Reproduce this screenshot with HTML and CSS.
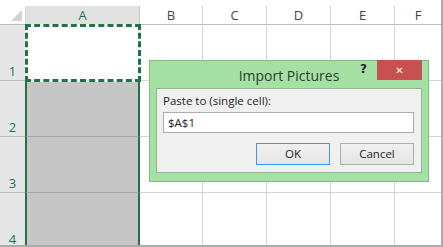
FILE: index.html
```html
<!DOCTYPE html>
<html lang="en">
<head>
    <meta charset="UTF-8">
    <title>Import Pictures</title>
    <link rel="stylesheet" href="styles.css">
</head>
<body>

<div class="sheet">
    <div class="grid">
        <!-- cabecera de columnas -->
        <div class="corner"><span class="tri"></span></div>
        <div class="colhead col-a">A</div>
        <div class="colhead">B</div>
        <div class="colhead">C</div>
        <div class="colhead">D</div>
        <div class="colhead">E</div>
        <div class="colhead last">F</div>

        <div class="rowhead">1</div>
        <div class="cell a active"></div>
        <div class="cell"></div><div class="cell"></div><div class="cell"></div><div class="cell"></div><div class="cell last"></div>

        <div class="rowhead">2</div>
        <div class="cell a"></div>
        <div class="cell"></div><div class="cell"></div><div class="cell"></div><div class="cell"></div><div class="cell last"></div>

        <div class="rowhead">3</div>
        <div class="cell a"></div>
        <div class="cell"></div><div class="cell"></div><div class="cell"></div><div class="cell"></div><div class="cell last"></div>

        <div class="rowhead">4</div>
        <div class="cell a"></div>
        <div class="cell"></div><div class="cell"></div><div class="cell"></div><div class="cell"></div><div class="cell last"></div>
    </div>

    <!-- celda copiada (hormigas) -->
    <div class="marquee"></div>

    <!-- dialogo -->
    <div class="dialog">
        <div class="titlebar">
            <span class="title">Import Pictures</span>
            <span class="help">?</span>
            <span class="close">&#x2715;</span>
        </div>
        <div class="panel">
            <div class="label">Paste to (single cell):</div>
            <div class="input">$A$1</div>
            <div class="buttons">
                <div class="btn default">OK</div>
                <div class="btn">Cancel</div>
            </div>
        </div>
    </div>
</div>

</body>
</html>
```

FILE: styles.css
```css
body {
    margin: 0;
    background: #acacac;
    font-family: "Open Sans", "Liberation Sans", sans-serif;
}
.sheet {
    position: relative;
    width: 441px;
    height: 245px;
    background: #fff;
    padding-top: 6px;
    box-sizing: border-box;
    overflow: hidden;
}
.grid {
    display: grid;
    grid-template-columns: 26px 114px 63px 64px 64px 64px 46px;
    grid-template-rows: 19px 56px 56px 56px 56px;
}
.grid > div {
    box-sizing: border-box;
}

/* cabeceras */
.corner {
    background: #fff;
    border-right: 1px solid #d8d8d8;
    border-bottom: 1px solid #bdbdbd;
    position: relative;
}
.tri {
    position: absolute;
    right: 3px;
    bottom: 3px;
    width: 0;
    height: 0;
    border-left: 11px solid transparent;
    border-bottom: 11px solid #d2d2d2;
}
.colhead {
    font-family: "Open Sans", sans-serif;
    font-size: 13px;
    color: #444;
    text-align: center;
    line-height: 18px;
    border-right: 1px solid #d8d8d8;
    border-bottom: 1px solid #bdbdbd;
}
.colhead.last { border-right: none; }
.colhead.col-a {
    background: #e1e1e1;
    color: #217346;
    border-right: 1px solid #c8c8c8;
}
.rowhead {
    background: #e6e6e6;
    color: #1f6f57;
    font-size: 13px;
    text-align: center;
    display: flex;
    align-items: flex-end;
    justify-content: center;
    padding-bottom: 1px;
    line-height: 16px;
    border-right: 1px solid #c8c8c8;
    border-bottom: 1px solid #bdbdbd;
}

/* celdas */
.cell {
    border-right: 1px solid #d4d4d4;
    border-bottom: 1px solid #d4d4d4;
}
.cell.last { border-right: none; }
.cell.a {
    background: #c6c6c6;
    border-left: 2px solid #217346;
    border-right: 2px solid #217346;
    border-bottom: 1px solid #a6a6a6;
    margin-left: -1px;
}
.cell.a.active { background: #fff; }

.marquee {
    position: absolute;
    left: 25px;
    top: 24px;
    width: 116px;
    height: 58px;
    box-sizing: border-box;
    border: 3px dashed #217346;
    background: #fff;
}

/* dialogo */
.dialog {
    position: absolute;
    left: 149px;
    top: 60px;
    width: 280px;
    height: 122px;
    box-sizing: border-box;
    background: #a5e1a5;
    border: 1px solid #7dbf7d;
    display: flex;
    flex-direction: column;
}
.titlebar {
    position: relative;
    height: 27px;
    display: flex;
    align-items: center;
    justify-content: center;
}
.title {
    font-size: 14px;
    color: #2f3d2f;
    padding-top: 1px;
}
.help {
    position: absolute;
    left: 210px;
    top: 1px;
    font-family: "DejaVu Sans", sans-serif;
    font-weight: bold;
    font-size: 12px;
    color: #222;
}
.close {
    position: absolute;
    right: 6px;
    top: -1px;
    width: 45px;
    height: 20px;
    background: #c75050;
    color: #fff;
    font-family: "DejaVu Sans", sans-serif;
    font-size: 10px;
    font-weight: bold;
    display: flex;
    align-items: center;
    justify-content: center;
}
.panel {
    flex: 1;
    margin: 0 6px 8px 6px;
    background: #f0f0f0;
    border: 1px solid #8fb88f;
    padding: 3px 7px 0 6px;
    font-size: 11.5px;
    color: #1e1e1e;
}
.label {
    height: 17px;
    line-height: 17px;
    margin-bottom: 3px;
}
.input {
    height: 21px;
    box-sizing: border-box;
    background: #fff;
    border: 1px solid #abadb3;
    padding-left: 4px;
    line-height: 19px;
}
.buttons {
    display: flex;
    justify-content: flex-end;
    gap: 10px;
    margin-top: 10px;
}
.btn {
    width: 74px;
    height: 22px;
    box-sizing: border-box;
    border: 1px solid #adadad;
    background: linear-gradient(#f0f0f0, #e5e5e5);
    text-align: center;
    line-height: 20px;
}
.btn.default {
    border-color: #3c9be8;
}
```
